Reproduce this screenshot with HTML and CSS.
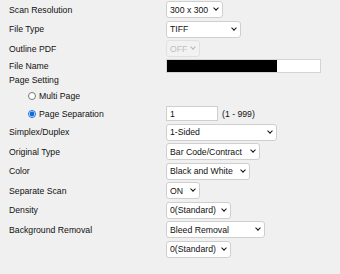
FILE: index.html
```
<!DOCTYPE html>
<html lang="en">
<head>
    <meta charset="UTF-8">
    <title>Scan Settings</title>
    <link rel="stylesheet" href="styles.css">
</head>
<body>
    <div class="settings">
        <div class="row">
            <label class="name" for="res">Scan Resolution</label>
            <span class="drop"><select id="res" class="w57"><option>300 x 300</option></select></span>
        </div>
        <div class="row">
            <label class="name" for="ftype">File Type</label>
            <span class="drop"><select id="ftype" class="w75"><option>TIFF</option></select></span>
        </div>
        <div class="row">
            <label class="name" for="outline">Outline PDF</label>
            <span class="drop off"><select id="outline" class="w34" disabled><option>OFF</option></select></span>
        </div>
        <div class="row row-file">
            <label class="name" for="fname">File Name</label>
            <input type="text" id="fname" class="file-input" readonly>
        </div>
        <div class="row row-title">
            <span class="name">Page Setting</span>
        </div>
        <div class="row row-radio">
            <label class="name radio"><input type="radio" name="page"> Multi Page</label>
        </div>
        <div class="row row-radio">
            <label class="name radio"><input type="radio" name="page" checked> Page Separation</label>
            <input type="text" class="num-input" value="1">
            <span class="hint">(1 - 999)</span>
        </div>
        <div class="row">
            <label class="name" for="duplex">Simplex/Duplex</label>
            <span class="drop"><select id="duplex" class="w111"><option>1-Sided</option></select></span>
        </div>
        <div class="row">
            <label class="name" for="otype">Original Type</label>
            <span class="drop"><select id="otype" class="w94"><option>Bar Code/Contract</option></select></span>
        </div>
        <div class="row">
            <label class="name" for="color">Color</label>
            <span class="drop"><select id="color" class="w84"><option>Black and White</option></select></span>
        </div>
        <div class="row">
            <label class="name" for="sep">Separate Scan</label>
            <span class="drop"><select id="sep" class="w34"><option>ON</option></select></span>
        </div>
        <div class="row">
            <label class="name" for="density">Density</label>
            <span class="drop"><select id="density" class="w65"><option>0(Standard)</option></select></span>
        </div>
        <div class="row">
            <label class="name" for="bg">Background Removal</label>
            <span class="drop"><select id="bg" class="w99"><option>Bleed Removal</option></select></span>
        </div>
        <div class="row">
            <span class="name"></span>
            <span class="drop"><select class="w65"><option>0(Standard)</option></select></span>
        </div>
    </div>
</body>
</html>
```
FILE: styles.css
```
* {
    margin: 0;
    padding: 0;
    box-sizing: border-box;
}

body {
    font-family: Arial, "Liberation Sans", sans-serif;
    font-size: 8.7px;
    color: #111;
    background-color: #f0f0f0;
}

.settings {
    display: flex;
    flex-direction: column;
}

.row {
    display: flex;
    align-items: center;
    height: 19.5px;
}

.row-file { height: 15px; }
.row-title { height: 13px; }
.row-radio { height: 18px; }

.name {
    width: 166px;
    padding-left: 9px;
    flex-shrink: 0;
}

.radio {
    display: flex;
    align-items: center;
    padding-left: 28px;
}

.radio input {
    width: 8px;
    height: 8px;
    margin-right: 3px;
    accent-color: #0b6cdb;
}

.drop {
    position: relative;
    display: flex;
}

/* chevron drawn over the select */
.drop::after {
    content: "";
    position: absolute;
    right: 5px;
    top: 5px;
    width: 3px;
    height: 3px;
    border-right: 1.7px solid #111;
    border-bottom: 1.7px solid #111;
    transform: rotate(45deg);
    pointer-events: none;
}

.drop.off::after {
    border-color: #b5b5b5;
}

select {
    appearance: none;
    height: 17px;
    font-family: inherit;
    font-size: 8.7px;
    color: #111;
    background: #fff;
    border: 1px solid #cfcfcf;
    border-radius: 3px;
    padding: 0 12px 0 3px;
    white-space: nowrap;
    overflow: hidden;
}

select:disabled {
    color: #aaa;
    border-color: #dcdcdc;
    background: #f3f3f3;
}

.w34 { width: 34px; }
.w57 { width: 57px; }
.w65 { width: 65px; }
.w75 { width: 75px; }
.w84 { width: 84px; }
.w94 { width: 94px; }
.w99 { width: 99px; }
.w111 { width: 111px; }

input[type="text"] {
    font-family: inherit;
    font-size: 8.7px;
    color: #111;
    background: #fff;
    border: 1px solid #cfcfcf;
    outline: none;
}

.file-input {
    width: 155px;
    height: 14px;
    background: linear-gradient(to right, #000 110px, #fff 110px) !important;
    border-color: #d4d4d4 !important;
}

.num-input {
    width: 52px;
    height: 15px;
    padding: 0 3px;
}

.hint {
    margin-left: 4px;
}
```
